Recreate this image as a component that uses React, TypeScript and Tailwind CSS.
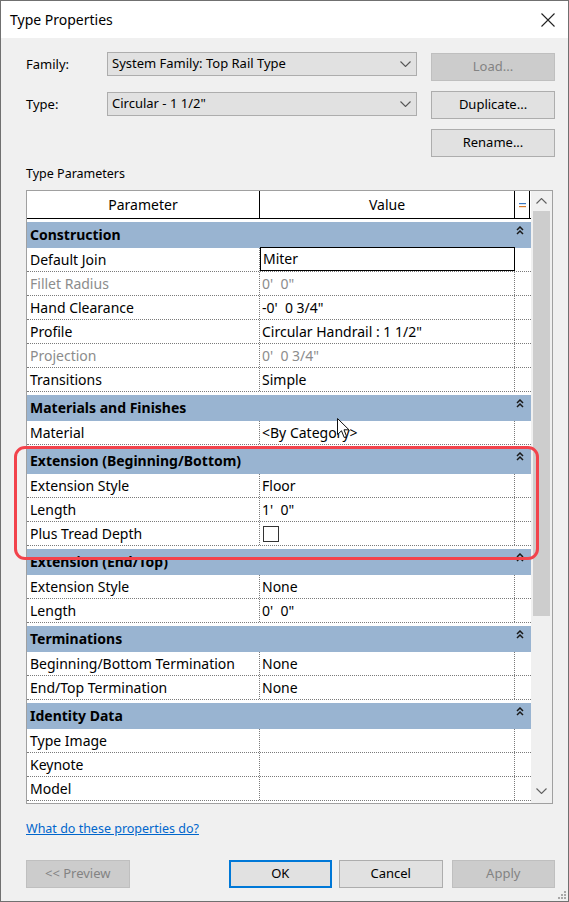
import React from "react";

type Row = { name: string; value?: string; muted?: boolean; edit?: boolean; check?: boolean };
type Group = { title: string; rows: Row[] };

const groups: Group[] = [
  {
    title: "Construction",
    rows: [
      { name: "Default Join", value: "Miter", edit: true },
      { name: "Fillet Radius", value: "0'  0\"", muted: true },
      { name: "Hand Clearance", value: "-0'  0 3/4\"" },
      { name: "Profile", value: "Circular Handrail : 1 1/2\"" },
      { name: "Projection", value: "0'  0 3/4\"", muted: true },
      { name: "Transitions", value: "Simple" },
    ],
  },
  { title: "Materials and Finishes", rows: [{ name: "Material", value: "<By Category>" }] },
  {
    title: "Extension (Beginning/Bottom)",
    rows: [
      { name: "Extension Style", value: "Floor" },
      { name: "Length", value: "1'  0\"" },
      { name: "Plus Tread Depth", check: true },
    ],
  },
  {
    title: "Extension (End/Top)",
    rows: [
      { name: "Extension Style", value: "None" },
      { name: "Length", value: "0'  0\"" },
    ],
  },
  {
    title: "Terminations",
    rows: [
      { name: "Beginning/Bottom Termination", value: "None" },
      { name: "End/Top Termination", value: "None" },
    ],
  },
  {
    title: "Identity Data",
    rows: [{ name: "Type Image" }, { name: "Keynote" }, { name: "Model" }],
  },
];

function Chevron({ up = false, className = "" }: { up?: boolean; className?: string }) {
  return (
    <svg width="11" height="6" viewBox="0 0 11 6" className={className}>
      <path
        d={up ? "M0.5 5.5 L5.5 0.5 L10.5 5.5" : "M0.5 0.5 L5.5 5.5 L10.5 0.5"}
        fill="none"
        stroke="currentColor"
        strokeWidth="1.1"
      />
    </svg>
  );
}

function Collapse() {
  return (
    <svg width="8" height="9" viewBox="0 0 8 9" className="text-[#1a1a1a]">
      <path d="M1 4 L4 1 L7 4 M1 8 L4 5 L7 8" fill="none" stroke="currentColor" strokeWidth="1.5" />
    </svg>
  );
}

function Select({ value }: { value: string }) {
  return (
    <div className="flex h-[24px] w-[310px] items-center justify-between border border-[#adadad] bg-[#e1e1e1] pl-[4px] pr-[5px] text-[13px]">
      <span>{value}</span>
      <Chevron className="text-[#555]" />
    </div>
  );
}

function Button({ label, disabled = false, primary = false, className = "" }: { label: string; disabled?: boolean; primary?: boolean; className?: string }) {
  return (
    <button
      type="button"
      className={`flex h-[28px] items-center justify-center text-[13px] ${
        disabled
          ? "border border-[#bfbfbf] bg-[#cccccc] text-[#838383]"
          : primary
          ? "border-2 border-[#0078d7] bg-[#e1e1e1] text-black"
          : "border border-[#adadad] bg-[#e1e1e1] text-black"
      } ${className}`}
    >
      {label}
    </button>
  );
}

export default function App() {
  return (
    <div className="relative h-[902px] w-[569px] overflow-hidden border border-[#707070] bg-[#f0f0f0] font-['Noto_Sans',sans-serif] text-black">
      {/* Title bar */}
      <div className="flex h-[37px] items-center justify-between bg-white pl-[9px] pr-[13px]">
        <span className="text-[14px]">Type Properties</span>
        <svg width="14" height="14" viewBox="0 0 14 14">
          <path d="M0.5 0.5 L13.5 13.5 M13.5 0.5 L0.5 13.5" stroke="#222" strokeWidth="1.1" />
        </svg>
      </div>

      <div className="pl-[25px] pr-[13px]">
        {/* Family */}
        <div className="mt-[14px] flex h-[29px] items-start">
          <span className="w-[81px] text-[13px] leading-[24px]">Family:</span>
          <Select value="System Family: Top Rail Type" />
          <Button label="Load..." disabled className="ml-[14px] mt-[1px] w-[124px]" />
        </div>
        {/* Type */}
        <div className="mt-[10px] flex h-[28px] items-start">
          <span className="mt-[1px] w-[81px] text-[13px] leading-[24px]">Type:</span>
          <div className="mt-[1px]">
            <Select value={'Circular - 1 1/2"'} />
          </div>
          <Button label="Duplicate..." className="ml-[14px] w-[124px]" />
        </div>
        <div className="mt-[10px] flex justify-end">
          <Button label="Rename..." className="w-[124px]" />
        </div>

        <div className="mt-[8px] text-[12.5px] leading-[17px]">Type Parameters</div>

        {/* Parameter grid */}
        <div className="mt-[8px] flex h-[614px] w-[527px] border border-[#a0a0a0] bg-white">
          <div className="h-full w-[504px] overflow-hidden text-[14px]">
            <div className="flex h-[28px] border-b border-black">
              <div className="flex w-[233px] items-center justify-center border-r border-black">Parameter</div>
              <div className="flex w-[255px] items-center justify-center border-r border-black">Value</div>
              <div className="flex w-[15px] items-center justify-center border-r border-black">
                <svg width="7" height="6" viewBox="0 0 7 6">
                  <rect x="0" y="1" width="7" height="1.2" fill="#3a78c2" />
                  <rect x="0" y="4" width="7" height="1.2" fill="#d4782a" />
                </svg>
              </div>
            </div>
            {groups.map((g) => (
              <div key={g.title}>
                <div className="h-[29px] pt-[3px]">
                  <div className="flex h-[26px] items-start justify-between bg-[#99b4d1] pl-[3px] pr-[7px]">
                    <span className="text-[14px] font-bold leading-[25px]">{g.title}</span>
                    <div className="pt-[4px]">
                      <Collapse />
                    </div>
                  </div>
                </div>
                {g.rows.map((r) => (
                  <div key={g.title + r.name} className="flex h-[24px] border-b border-dotted border-[#7a7a7a]">
                    <div
                      className={`w-[233px] border-r border-dotted border-[#7a7a7a] pl-[3px] leading-[23px] ${
                        r.muted ? "text-[#8c8c8c]" : ""
                      }`}
                    >
                      {r.name}
                    </div>
                    {r.edit ? (
                      <div className="-mt-px h-[24px] w-[255px] border border-black pl-[2px] leading-[22px]">{r.value}</div>
                    ) : (
                      <div
                        className={`flex w-[255px] items-center border-r border-dotted border-[#7a7a7a] pl-[2px] ${
                          r.muted ? "text-[#8c8c8c]" : ""
                        }`}
                      >
                        {r.check ? (
                          <div className="ml-[1px] h-[16px] w-[16px] border border-[#333] bg-white" />
                        ) : (
                          <span className="whitespace-pre leading-[23px]">{r.value}</span>
                        )}
                      </div>
                    )}
                    <div className="w-[15px]" />
                  </div>
                ))}
              </div>
            ))}
          </div>
          {/* Scrollbar */}
          <div className="flex h-full w-[21px] flex-col bg-[#f0f0f0]">
            <div className="flex h-[20px] items-center justify-center text-[#606060]">
              <Chevron up />
            </div>
            <div className="mx-[2px] h-[405px] bg-[#cdcdcd]" />
            <div className="flex-1" />
            <div className="flex h-[24px] items-center justify-center text-[#606060]">
              <Chevron />
            </div>
          </div>
        </div>

        <div className="mt-[15px] leading-[17px]">
          <span className="text-[12.5px] text-[#0066cc] underline">What do these properties do?</span>
        </div>

        <div className="mt-[23px] flex items-center">
          <Button label="<< Preview" disabled className="w-[104px]" />
          <Button label="OK" primary className="ml-[99px] w-[104px]" />
          <Button label="Cancel" className="ml-[7px] w-[104px]" />
          <Button label="Apply" disabled className="ml-[9px] w-[104px]" />
        </div>
      </div>

      {/* Annotation highlight */}
      <div className="pointer-events-none absolute left-[13px] top-[445px] h-[114px] w-[525px] rounded-[11px] border-[3px] border-[#f2434c]" />

      {/* Mouse cursor */}
      <svg className="pointer-events-none absolute left-[336px] top-[417px]" width="13" height="21" viewBox="0 0 13 21">
        <path d="M0.5 0.5 L0.5 16.5 L4.5 12.8 L7.2 19.5 L9.6 18.5 L7 11.8 L12 11.8 Z" fill="white" stroke="#111" strokeWidth="1" />
      </svg>

      {/* Resize grip */}
      <div className="absolute bottom-[2px] right-[2px] grid grid-cols-3 gap-[1px]">
        <span className="h-[2px] w-[2px]" />
        <span className="h-[2px] w-[2px]" />
        <span className="h-[2px] w-[2px] bg-[#a8a8a8]" />
        <span className="h-[2px] w-[2px]" />
        <span className="h-[2px] w-[2px] bg-[#a8a8a8]" />
        <span className="h-[2px] w-[2px] bg-[#a8a8a8]" />
        <span className="h-[2px] w-[2px] bg-[#a8a8a8]" />
        <span className="h-[2px] w-[2px] bg-[#a8a8a8]" />
        <span className="h-[2px] w-[2px] bg-[#a8a8a8]" />
      </div>
    </div>
  );
}
